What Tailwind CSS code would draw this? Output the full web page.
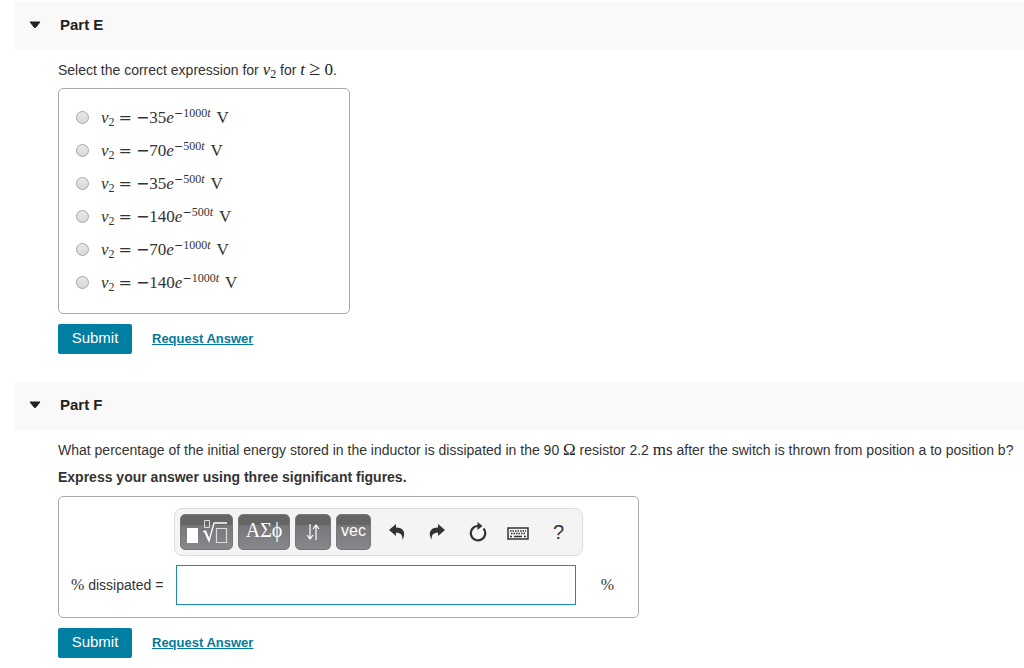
<!DOCTYPE html>
<html lang="en">
<head>
    <meta charset="UTF-8">
    <meta name="viewport" content="width=device-width, initial-scale=1.0">
    <title>Part E - Part F</title>
    <script src="https://cdn.jsdelivr.net/npm/@tailwindcss/browser@4"></script>
</head>
<body class="bg-white pt-[2px] pl-[15px] font-['Liberation_Sans',Arial,sans-serif] text-sm leading-5 text-[#333] overflow-x-hidden">

    <!-- Part E -->
    <section class="mb-7">
        <header class="flex items-center h-12 pl-[14px] pb-[2px] bg-[#f9f9f9]">
            <button type="button" aria-label="Collapse Part E" class="w-[31px]">
                <svg class="w-3 h-2" viewBox="0 0 12 8"><path d="M1 1h10L6.600 6.400Q6 7 5.400 6.400Z" fill="#222" stroke="#222" stroke-linejoin="round"/></svg>
            </button>
            <h2 class="text-[15px] font-bold text-[#222]">Part E</h2>
        </header>
        <div class="pl-[43px] pt-2">
            <p>Select the correct expression for <span class="font-['Liberation_Serif',serif] text-[17px] leading-none text-[#222]"><i>v</i><sub class="text-xs">2</sub></span> for <span class="font-['Liberation_Serif',serif] text-[17px] leading-none text-[#222]"><i>t</i> <span class="text-[20px] leading-none">≥</span> 0</span>.</p>
            <fieldset class="mt-2 max-w-[292px] border border-[#aaa] rounded-[5px] px-[17px] pt-[12px] pb-[14px] font-['Liberation_Serif',serif] text-[17px] text-[#333]">
                <label class="flex items-center h-[33px]">
                    <input type="radio" name="v2" class="appearance-none size-[13px] mr-3 rounded-full border border-[#a5a5a5] bg-linear-to-b from-[#e8e8e8] to-[#d8d8d8]">
                    <span><i>v</i><sub class="text-xs">2</sub><span class="mx-1 font-['DejaVu_Sans',sans-serif] text-base leading-none">=</span><span class="font-['DejaVu_Sans',sans-serif] text-base leading-none">−</span>35<i>e</i><sup class="text-xs"><span class="font-['DejaVu_Sans',sans-serif] text-[11px]">−</span>1000<i>t</i></sup><span class="ml-[6px]">V</span></span>
                </label>
                <label class="flex items-center h-[33px]">
                    <input type="radio" name="v2" class="appearance-none size-[13px] mr-3 rounded-full border border-[#a5a5a5] bg-linear-to-b from-[#e8e8e8] to-[#d8d8d8]">
                    <span><i>v</i><sub class="text-xs">2</sub><span class="mx-1 font-['DejaVu_Sans',sans-serif] text-base leading-none">=</span><span class="font-['DejaVu_Sans',sans-serif] text-base leading-none">−</span>70<i>e</i><sup class="text-xs"><span class="font-['DejaVu_Sans',sans-serif] text-[11px]">−</span>500<i>t</i></sup><span class="ml-[6px]">V</span></span>
                </label>
                <label class="flex items-center h-[33px]">
                    <input type="radio" name="v2" class="appearance-none size-[13px] mr-3 rounded-full border border-[#a5a5a5] bg-linear-to-b from-[#e8e8e8] to-[#d8d8d8]">
                    <span><i>v</i><sub class="text-xs">2</sub><span class="mx-1 font-['DejaVu_Sans',sans-serif] text-base leading-none">=</span><span class="font-['DejaVu_Sans',sans-serif] text-base leading-none">−</span>35<i>e</i><sup class="text-xs"><span class="font-['DejaVu_Sans',sans-serif] text-[11px]">−</span>500<i>t</i></sup><span class="ml-[6px]">V</span></span>
                </label>
                <label class="flex items-center h-[33px]">
                    <input type="radio" name="v2" class="appearance-none size-[13px] mr-3 rounded-full border border-[#a5a5a5] bg-linear-to-b from-[#e8e8e8] to-[#d8d8d8]">
                    <span><i>v</i><sub class="text-xs">2</sub><span class="mx-1 font-['DejaVu_Sans',sans-serif] text-base leading-none">=</span><span class="font-['DejaVu_Sans',sans-serif] text-base leading-none">−</span>140<i>e</i><sup class="text-xs"><span class="font-['DejaVu_Sans',sans-serif] text-[11px]">−</span>500<i>t</i></sup><span class="ml-[6px]">V</span></span>
                </label>
                <label class="flex items-center h-[33px]">
                    <input type="radio" name="v2" class="appearance-none size-[13px] mr-3 rounded-full border border-[#a5a5a5] bg-linear-to-b from-[#e8e8e8] to-[#d8d8d8]">
                    <span><i>v</i><sub class="text-xs">2</sub><span class="mx-1 font-['DejaVu_Sans',sans-serif] text-base leading-none">=</span><span class="font-['DejaVu_Sans',sans-serif] text-base leading-none">−</span>70<i>e</i><sup class="text-xs"><span class="font-['DejaVu_Sans',sans-serif] text-[11px]">−</span>1000<i>t</i></sup><span class="ml-[6px]">V</span></span>
                </label>
                <label class="flex items-center h-[33px]">
                    <input type="radio" name="v2" class="appearance-none size-[13px] mr-3 rounded-full border border-[#a5a5a5] bg-linear-to-b from-[#e8e8e8] to-[#d8d8d8]">
                    <span><i>v</i><sub class="text-xs">2</sub><span class="mx-1 font-['DejaVu_Sans',sans-serif] text-base leading-none">=</span><span class="font-['DejaVu_Sans',sans-serif] text-base leading-none">−</span>140<i>e</i><sup class="text-xs"><span class="font-['DejaVu_Sans',sans-serif] text-[11px]">−</span>1000<i>t</i></sup><span class="ml-[6px]">V</span></span>
                </label>
            </fieldset>
            <div class="flex items-center mt-[10px]">
                <button type="submit" class="w-[74px] h-[30px] pb-[2px] rounded-[2px] bg-[#007fa3] text-[15px] text-white">Submit</button>
                <a href="#" class="ml-5 text-[13px] font-bold text-[#047a9c] underline">Request Answer</a>
            </div>
        </div>
    </section>

    <!-- Part F -->
    <section>
        <header class="flex items-center h-12 pl-[14px] pb-[2px] bg-[#f9f9f9]">
            <button type="button" aria-label="Collapse Part F" class="w-[31px]">
                <svg class="w-3 h-2" viewBox="0 0 12 8"><path d="M1 1h10L6.600 6.400Q6 7 5.400 6.400Z" fill="#222" stroke="#222" stroke-linejoin="round"/></svg>
            </button>
            <h2 class="text-[15px] font-bold text-[#222]">Part F</h2>
        </header>
        <div class="pl-[43px] pt-[10px]">
            <p>What percentage of the initial energy stored in the inductor is dissipated in the 90 <span class="font-['Liberation_Serif',serif] text-[17px] leading-none text-[#222]">Ω</span> resistor 2.2 <span class="font-['Liberation_Serif',serif] text-[17px] leading-none text-[#222]">ms</span> after the switch is thrown from position a to position b?</p>
            <p class="mt-[7px] font-bold">Express your answer using three significant figures.</p>
            <div class="mt-[9px] max-w-[581px] border border-[#aaa] rounded-[5px] pt-[11px] pb-3 pl-3 pr-6">
                <div class="flex items-center ml-[103px] mr-[31px] h-12 px-[5px] rounded-lg border border-[#ddd] bg-[#f4f4f4]">
                    <button type="button" aria-label="Templates" class="grid place-items-center w-[53px] h-9 rounded-[5px] border border-[#777] bg-linear-to-b from-[#656565] from-30% via-[#77777b] via-30% to-[#88888c]">
                        <svg class="w-[42px] h-6" viewBox="0 0 42 24" fill="none" stroke="#fff">
                            <path d="M1 8h11v15H1z" fill="#fff" stroke="none"/>
                            <path d="M18.500 .5h5v7h-5z" stroke="#ddd"/>
                            <path d="M30.500 8.500h10v14h-10z" stroke="#ddd" stroke-width="1.200"/>
                            <path d="M17 12l2-1 4 10 5-18h13" stroke-width="1.300"/>
                            <path d="M19 11l4 9" stroke-width="2"/>
                        </svg>
                    </button>
                    <button type="button" class="ml-[5px] w-[52px] h-9 pb-1 rounded-[5px] border border-[#777] bg-linear-to-b from-[#656565] from-30% via-[#77777b] via-30% to-[#88888c] font-['Liberation_Serif',serif] text-xl text-white">ΑΣϕ</button>
                    <button type="button" aria-label="Arrows" class="grid place-items-center ml-[5px] w-9 h-9 rounded-[5px] border border-[#777] bg-linear-to-b from-[#656565] from-30% via-[#77777b] via-30% to-[#88888c]">
                        <svg class="w-4 h-[18px]" viewBox="0 0 16 18" fill="none" stroke="#fff" stroke-width="1.200"><path d="M5 1v15M2 12l3 4 3-4M11 17V2M8 6l3-4 3 4"/></svg>
                    </button>
                    <button type="button" class="ml-[5px] w-[35px] h-9 pb-[2px] rounded-[5px] border border-[#777] bg-linear-to-b from-[#656565] from-30% via-[#77777b] via-30% to-[#88888c] text-base text-white">vec</button>
                    <button type="button" aria-label="Undo" class="ml-[18px]">
                        <svg class="w-4 h-4" viewBox="0 0 16 16" fill="#333"><path d="M7 0v3.500c6 0 9 3 8 8.500l-1.500 4C13.500 11 12 8.800 7 8.800V12L0 6Z"/></svg>
                    </button>
                    <button type="button" aria-label="Redo" class="ml-6">
                        <svg class="w-4 h-4" viewBox="0 0 16 16" fill="#333"><path d="M9 0v3.500C3 3.500 0 6.500 1 12l1.500 4C2.500 11 4 8.800 9 8.800V12l7-6Z"/></svg>
                    </button>
                    <button type="button" aria-label="Reset" class="ml-6">
                        <svg class="w-[18px] h-5" viewBox="0 0 18 20" fill="none" stroke="#333" stroke-width="2.200"><path d="M9 4A7.200 7.200 0 1 0 14.500 6.500"/><path d="M8.500 0l5 4-5 4z" fill="#333" stroke="none"/></svg>
                    </button>
                    <button type="button" aria-label="Keyboard" class="ml-5 mt-[3px]">
                        <svg class="w-[22px] h-[13px]" viewBox="0 0 22 13" fill="none" stroke="#333"><path d="M1 1h20v11H1z" stroke-width="1.500"/><path d="M3 4h16M4 6.500h15" stroke-width="1.500" stroke-dasharray="1.500 1"/><path d="M3 9.500h2M7 9.500h8M17 9.500h2" stroke-width="1.500"/></svg>
                    </button>
                    <button type="button" aria-label="Help" class="ml-6 text-xl text-[#333]">?</button>
                </div>
                <div class="flex items-center mt-[9px]">
                    <label for="answer" class="w-[105px] shrink-0"><span class="font-['Liberation_Serif',serif] text-base leading-none">%</span> dissipated =</label>
                    <input id="answer" type="text" class="flex-1 min-w-0 h-10 px-2 border border-[#1c8cad] bg-white outline-none">
                    <span class="ml-[25px] font-['Liberation_Serif',serif] text-base">%</span>
                </div>
            </div>
            <div class="flex items-center mt-[10px]">
                <button type="submit" class="w-[74px] h-[30px] pb-[2px] rounded-[2px] bg-[#007fa3] text-[15px] text-white">Submit</button>
                <a href="#" class="ml-5 text-[13px] font-bold text-[#047a9c] underline">Request Answer</a>
            </div>
        </div>
    </section>
</body>
</html>
